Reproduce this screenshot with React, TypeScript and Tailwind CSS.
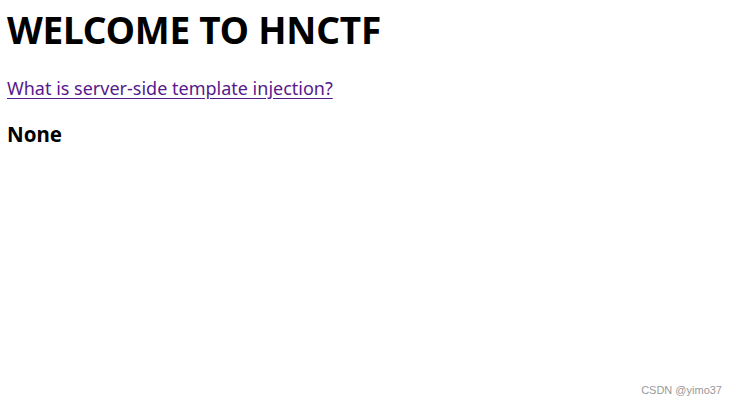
export default function App() {
  return (
    <div className="relative min-h-[406px] w-full bg-white px-[7px] text-black" style={{ fontFamily: '"Noto Sans", "Open Sans", sans-serif' }}>
      <h1 className="m-0 pt-[5px] text-[37px] font-bold leading-[50px] tracking-[-0.2px]">WELCOME TO HNCTF</h1>
      <p className="mt-[20px] text-[18px] leading-[26px]">
        <a href="#" className="text-[#551a8b] underline underline-offset-[3px]">What is server-side template injection?</a>
      </p>
      <h3 className="mt-[18px] text-[20.5px] font-bold leading-[30px]">None</h3>
      <div className="absolute bottom-[8px] right-[14px] text-[11px] text-[#999]" style={{ fontFamily: '"Liberation Sans", Arial, sans-serif' }}>
        CSDN @yimo37
      </div>
    </div>
  );
}
